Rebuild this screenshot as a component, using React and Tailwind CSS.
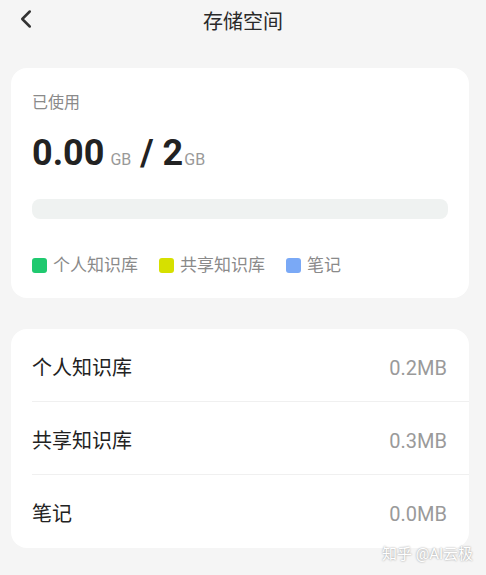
import { ChevronLeft } from 'lucide-react'

const legend = [
  { label: '个人知识库', color: 'bg-[#1fc96f]' },
  { label: '共享知识库', color: 'bg-[#d6e000]' },
  { label: '笔记', color: 'bg-[#7aa9f6]' }
]

const rows = [
  { label: '个人知识库', size: '0.2MB' },
  { label: '共享知识库', size: '0.3MB' },
  { label: '笔记', size: '0.0MB' }
]

const App = () => {
  return (
    <div className="relative h-[575px] overflow-hidden bg-[#f5f5f5] font-['Roboto','Noto_Sans_CJK_SC',sans-serif]">
      <header className="relative flex h-[40px] items-center justify-center pt-[3px]">
        <ChevronLeft className="absolute left-[11px] top-[4px] text-[#333]" size={30} strokeWidth={2} />
        <h1 className="text-[20px] text-[#2a2a2a]">存储空间</h1>
      </header>

      <section className="mt-[28px] ml-[11px] w-[458px] rounded-[16px] bg-white px-[21px] pt-[22px] pb-[22px]">
        <p className="text-[16px] leading-[26px] text-[#8a8a8a]">已使用</p>
        <div className="mt-[15px] flex items-baseline text-[#222]">
          <span className="text-[36px] font-bold leading-[44px]">0.00</span>
          <span className="ml-[6px] text-[16px] text-[#999]">GB</span>
          <span className="ml-[9px] text-[36px] font-bold leading-[44px]">/ 2</span>
          <span className="ml-[1px] text-[16px] text-[#999]">GB</span>
        </div>
        <div className="mt-[24px] h-[20px] w-full rounded-[8px] bg-[#eff2f1]" />
        <div className="mt-[35px] flex items-center">
          {legend.map((item, index) => (
            <div key={index} className="mr-[21px] flex items-center">
              <span className={`h-[15px] w-[15px] rounded-[3px] ${item.color}`} />
              <span className="ml-[6px] text-[17px] leading-[22px] text-[#8a8a8a]">{item.label}</span>
            </div>
          ))}
        </div>
      </section>

      <section className="mt-[31px] ml-[11px] w-[458px] overflow-hidden rounded-[16px] bg-white pl-[21px]">
        {rows.map((row, index) => (
          <div
            key={index}
            className={`flex h-[73px] items-center justify-between pt-[5px] pr-[22px] ${index < rows.length - 1 ? 'border-b border-[#f0f0f0]' : ''}`}
          >
            <span className="text-[20px] text-[#222]">{row.label}</span>
            <span className="text-[20px] text-[#9a9a9a]">{row.size}</span>
          </div>
        ))}
      </section>

      <div className="absolute right-[13px] bottom-[10px] text-[15px] text-white [text-shadow:0_0_2px_rgba(0,0,0,0.45)]">
        知乎 @AI云极
      </div>
    </div>
  )
}

export default App
